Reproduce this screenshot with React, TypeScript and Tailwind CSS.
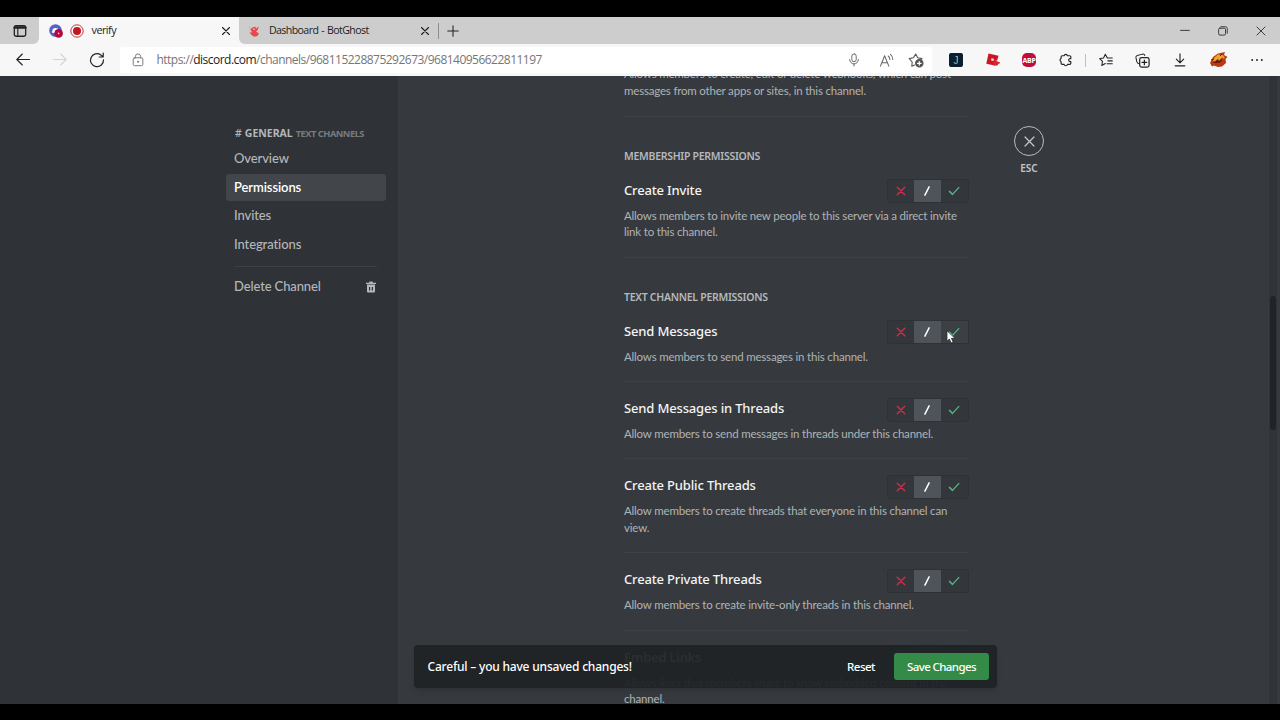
import { clsx } from "clsx";
import type { ReactNode } from "react";

type Permission = {
	title: string;
	lines: string[];
	hovered?: boolean;
};

const MEMBERSHIP: Permission[] = [
	{
		title: "Create Invite",
		lines: ["Allows members to invite new people to this server via a direct invite", "link to this channel."]
	}
];

const TEXT_CHANNEL: Permission[] = [
	{ title: "Send Messages", lines: ["Allows members to send messages in this channel."], hovered: true },
	{ title: "Send Messages in Threads", lines: ["Allow members to send messages in threads under this channel."] },
	{ title: "Create Public Threads", lines: ["Allow members to create threads that everyone in this channel can", "view."] },
	{ title: "Create Private Threads", lines: ["Allow members to create invite-only threads in this channel."] },
	{ title: "Embed Links", lines: ["Allows links that members share to show embedded content in this", "channel."] }
];

const NAV = ["Overview", "Permissions", "Invites", "Integrations"];

function Icon({ size = 16, className, children }: { size?: number; className?: string; children: ReactNode }) {
	return (
		<svg
			width={size}
			height={size}
			viewBox="0 0 16 16"
			fill="none"
			stroke="currentColor"
			strokeWidth="1.1"
			strokeLinecap="round"
			strokeLinejoin="round"
			className={clsx("shrink-0", className)}
		>
			{children}
		</svg>
	);
}

function Cell({ children }: { children: ReactNode }) {
	return <div className="flex w-[37px] shrink-0 items-center justify-center">{children}</div>;
}

function CloseIcon({ size = 8 }: { size?: number }) {
	return (
		<Icon size={size}>
			<path d="M1 1l14 14M15 1L1 15" strokeWidth="2.3" />
		</Icon>
	);
}

function TabStrip() {
	return (
		<div className="flex h-[27px] bg-[#f7f7f7] text-[#222]">
			<div className="flex w-[39px] items-center justify-center rounded-br-md bg-[#cdcdcd]">
				<Icon size={14} className="text-[#222]">
					<rect x="1.5" y="2" width="13" height="12" rx="2" strokeWidth="1.5" />
					<path d="M2 4h12" strokeWidth="3" />
					<path d="M5.5 5v9" strokeWidth="1.3" />
				</Icon>
			</div>
			<div className="flex w-[200px] items-center rounded-t-md bg-[#f7f7f7] pl-[9.5px]">
				<svg width="14" height="14" viewBox="0 0 14 14" className="shrink-0">
					<circle cx="6.5" cy="6.5" r="6.3" fill="#5661c9" />
					<path d="M3 8.7c.2-2.2.7-3.7 1.4-4.3C5.6 3.7 7.500 3.7 8.8 4.4L10 7 6 9z" fill="#fff" />
					<circle cx="9.6" cy="9.4" r="4.3" fill="#b3093a" />
					<circle cx="9.6" cy="9.4" r="0.9" fill="#f2c4cf" />
				</svg>
				<svg width="14" height="14" viewBox="0 0 14 14" className="ml-[7px] shrink-0">
					<circle cx="7" cy="7" r="6.2" fill="none" stroke="#b73842" strokeWidth="1" />
					<circle cx="7" cy="7" r="4" fill="#c4161f" />
				</svg>
				<span className="ml-[8px] flex-1 text-[10.8px] tracking-[-0.5px]">verify</span>
				<span className="mr-[9.5px]">
					<CloseIcon />
				</span>
			</div>
			<div className="flex flex-1 items-center rounded-bl-md bg-[#cdcdcd]">
				<svg width="12" height="12" viewBox="0 0 12 12" className="ml-[9px] shrink-0" fill="#e8484c">
					<path d="M.5.8l2.3 3.400L4.300 2.500 6 2l1.500-.3.500 2 2.800-2.500L9.700 5 8 6.700l3 1.500L9.500 11 6 11.700 3 9.500 1.500 7.300l2.800.200L3 5.500z" />
					<circle cx="6" cy="4.2" r=".9" fill="#f5b3b3" />
				</svg>
				<span className="ml-[9px] w-[151.5px] text-[10.6px] tracking-[-0.6px] [word-spacing:0.8px] whitespace-nowrap">
					Dashboard - BotGhost
				</span>
				<CloseIcon />
				<div className="ml-[9px] h-4 w-px bg-[#8d8d8d]" />
				<Icon size={12} className="ml-[8px] text-[#222]">
					<path d="M8 1v14M1 8h14" strokeWidth="1.4" />
				</Icon>
				<div className="mr-[14px] ml-auto flex items-center gap-[28px] text-[#333]">
					<Icon size={10}>
						<path d="M1 7h14" strokeWidth="1.5" />
					</Icon>
					<Icon size={10}>
						<rect x="1" y="3.5" width="11" height="11" rx="2" strokeWidth="1.5" />
						<path d="M4.5 1.2H12A2.800 2.800 0 0 1 14.8 4v7.500" strokeWidth="1.5" />
					</Icon>
					<Icon size={10}>
						<path d="M1.500 1.500l13 13M14.500 1.500l-13 13" strokeWidth="1.5" />
					</Icon>
				</div>
			</div>
		</div>
	);
}

function Toolbar() {
	return (
		<div className="flex h-8 items-center bg-[#f7f7f7] text-[#222]">
			<div className="flex w-[120px] items-center">
				<Icon className="ml-[15px]">
					<path d="M14.5 7.500H1.800M7.300 2L1.800 7.500l5.500 5.500" />
				</Icon>
				<Icon className="ml-[21px] text-[#d4d4d4]">
					<path d="M1.500 7.500h12.700M8.700 2L14.200 7.500l-5.500 5.500" />
				</Icon>
				<Icon className="ml-[20.5px]">
					<path d="M14.500 7.800A6.500 6.500 0 1 1 11.800 2.900L14 4.700M14.200 1v4h-4" strokeWidth="1.2" />
				</Icon>
			</div>
			<div className="flex h-[26px] w-[812px] items-center rounded-[3px] bg-white">
				<Icon size={14} className="ml-[11px] text-[#777]">
					<rect x="2.5" y="5.5" width="11" height="9" rx="1.5" />
					<path d="M5 5.500V4a3 3 0 0 1 6 0v1.500" />
					<circle cx="8" cy="10" r=".7" fill="currentColor" />
				</Icon>
				<span className="ml-[11.5px] flex-1 text-[12px] tracking-[-0.52px] whitespace-nowrap text-[#767676]">
					https://<span className="text-[#1b1b1b]">discord.com</span>/channels/968115228875292673/968140956622811197
				</span>
				<Icon size={14} className="text-[#666]">
					<rect x="5.5" y="1" width="5" height="9" rx="2.5" />
					<path d="M3 7.500a5 5 0 0 0 10 0M8 12.500V15" />
				</Icon>
				<Icon size={15} className="ml-[18px] text-[#666]">
					<path d="M1.500 14L6 3l4.500 11M3 10.500h6M9.800 3.200q1.800 1.300 1.800 3.800M12.200 1.500q2.500 2 2.500 5.500" />
				</Icon>
				<Icon size={16} className="mr-[8px] ml-[14px] text-[#555]">
					<path d="M6.500 13L3.800 14.200l.4-4.200L1.200 6.600l4.300-.8L7.700 2l2 3.800 4.300.8-1.200 1.300" />
					<circle cx="11.3" cy="11.3" r="3.7" fill="#555" />
					<path d="M11.300 9.500v3.600M9.500 11.300h3.600" stroke="#fff" strokeWidth="1.2" />
				</Icon>
			</div>
			<div className="ml-[5px] flex flex-1 items-center">
				<Cell>
					<svg width="14" height="14" viewBox="0 0 14 14">
						<rect width="14" height="14" rx="2" fill="#0b1f30" />
						<path d="M5 9.200q.3 1.300 1.800 1.300 1.500 0 1.500-1.500V3.500H6.500" fill="none" stroke="#6cb4dc" strokeWidth="1.2" />
					</svg>
				</Cell>
				<Cell>
					<svg width="14" height="14" viewBox="0 0 14 14">
						<path d="M2.500.5l10 2.200-1.300 4.800-2 .2-.6 4.800L.3 10.800z" fill="#cc1626" />
						<path d="M5.500 5.300l2.500.5-.5 2.300-2.500-.5z" fill="#f7d6d6" />
						<circle cx="9.800" cy="10.300" r="2.500" fill="#dc2432" />
						<circle cx="12.800" cy="9.800" r="1.100" fill="#dc2432" />
					</svg>
				</Cell>
				<Cell>
					<div className="mr-px flex size-[14px] items-center justify-center rounded-[5px] bg-[#c00d3c] text-[7px] leading-none font-bold tracking-[-0.3px] text-white">
						ABP
					</div>
				</Cell>
				<Cell>
					<Icon size={14} className="mr-px">
						<path
							d="M3.600 3.200h2.200a2 2 0 0 1 3.900 0h2.600a1.200 1.200 0 0 1 1.200 1.200v2h-.8a1.700 1.700 0 0 0 0 3.400h.8v2a1.200 1.200 0 0 1-1.200 1.200H9.700a2 2 0 0 1-3.900 0H3.600a1.200 1.200 0 0 1-1.200-1.200v-1.900a2 2 0 0 1 0-3.700V4.400a1.200 1.200 0 0 1 1.200-1.200z"
							strokeWidth="1.3"
						/>
					</Icon>
				</Cell>
				<div className="mr-px h-[13px] w-px bg-[#c0c0c0]" />
				<Cell>
					<Icon size={14}>
						<path
							d="M9.500 5.700L7.200 1.500 5.200 5.800.8 6.400l3.200 3.200-.8 4.700 4-2.300M9.500 5.700h5.700M10.200 9h5M9.200 12.300h6"
							strokeWidth="1.2"
						/>
					</Icon>
				</Cell>
				<Cell>
					<Icon size={15}>
						<rect x="5" y="5" width="10" height="10" rx="2" strokeWidth="1.3" />
						<path d="M10 7.500v5M7.500 10h5" strokeWidth="1.3" />
						<path d="M4.500 11.500A3 3 0 0 1 2 9.500L1 5A2 2 0 0 1 2.500 2.700L8 1.200a2 2 0 0 1 2.400 1.400" />
					</Icon>
				</Cell>
				<Cell>
					<Icon size={14}>
						<path d="M8 1v10M3.800 7L8 11.200 12.200 7M2.500 14.700h11" strokeWidth="1.3" />
					</Icon>
				</Cell>
				<div className="flex w-10 items-center justify-center pl-px">
					<svg width="20" height="18" viewBox="0 0 20 18">
						<path d="M1 12L4 6l5-3.500L16 1l-1 3 3.500 2-2 2 .5 4-4 3.500L9 16l-4-1.500-2 1z" fill="#b83912" />
						<path d="M5 7l4-3.500 5 .5 2 3-4 1-3 3-5-1z" fill="#f0a32b" />
						<path d="M4 12l5-4 1 2 4-4-2 5-3 1z" fill="#6b180d" />
						<path d="M2 9l3-1M11 5l2-2" stroke="#4b2413" />
					</svg>
				</div>
				<Cell>
					<Icon size={14}>
						<path d="M2.500 8h.01M8 8h.01M13.500 8h.01" strokeWidth="2.2" />
					</Icon>
				</Cell>
			</div>
		</div>
	);
}

function Toggle({ hovered }: { hovered?: boolean }) {
	return (
		<div className="relative -mt-[0.7px] -mr-[0.5px] flex h-6 w-[82px] shrink-0 rounded-[3px] border border-[#2e3135] bg-[#33363a]">
			<div className="flex w-[26px] items-center justify-center text-[#c5304a]">
				<Icon size={10}>
					<path d="M2 2l12 12M14 2L2 14" strokeWidth="2.4" />
				</Icon>
			</div>
			<div className="flex w-[27px] items-center justify-center bg-[#4f545a] text-white">
				<Icon size={12}>
					<path d="M10.800 2.500l-5.600 11" strokeWidth="2" />
				</Icon>
			</div>
			<div className={clsx("flex w-[27px] items-center justify-center text-[#55b083]", hovered && "bg-[#3c4044]")}>
				<Icon size={12}>
					<path d="M2 8.500l4 4L14.300 3.500" strokeWidth="1.9" />
				</Icon>
			</div>
			{hovered && (
				<svg width="10" height="14" viewBox="0 0 10 14" className="absolute top-[9px] left-[58px]">
					<path d="M1 .8v10.400l2.400-2.200 1.700 3.900 2-.9-1.700-3.700H9z" fill="#fff" stroke="#222" strokeWidth=".7" />
				</svg>
			)}
		</div>
	);
}

function Description({ lines }: { lines: string[] }) {
	return (
		<div className="font-['Lato',sans-serif] text-[11.5px] leading-[16.5px] tracking-[-0.19px] text-[#b0b3b7]">
			{lines.map((line) => (
				<p key={line} className="whitespace-nowrap">
					{line}
				</p>
			))}
		</div>
	);
}

function PermissionRow({ title, lines, hovered }: Permission) {
	return (
		<div className="border-b border-[#3e4246] pt-4 pb-[15.8px]">
			<div className="flex h-7 items-start justify-between">
				<h3 className="text-[13px] leading-5 font-medium tracking-[-0.16px] whitespace-nowrap text-[#f3f4f5]">
					{title}
				</h3>
				<Toggle hovered={hovered} />
			</div>
			<Description lines={lines} />
		</div>
	);
}

function Section({ heading, items }: { heading: string; items: Permission[] }) {
	return (
		<section className="pt-[32.3px]">
			<h2 className="text-[10.5px] leading-[15px] font-semibold tracking-[-0.28px] text-[#b5b8bc] uppercase">
				{heading}
			</h2>
			{items.map((item) => (
				<PermissionRow key={item.title} {...item} />
			))}
		</section>
	);
}

function Sidebar() {
	return (
		<aside className="w-[398px] shrink-0 bg-[#2f3236] pt-12 pl-[226px] text-[#b4b7bb]">
			<div className="flex h-[18px] items-center pt-px pl-[9px] text-[10.5px] font-bold whitespace-nowrap">
				<span className="mr-[3px] font-medium">#</span>
				GENERAL
				<span className="ml-[3px] text-[9.3px] font-bold tracking-[-0.5px] text-[#777b80]">TEXT CHANNELS</span>
			</div>
			<nav className="mt-[3px] flex w-40 flex-col gap-[1.5px] font-['Lato',sans-serif] text-[13px] font-medium">
				{NAV.map((item) => (
					<a
						key={item}
						className={clsx(
							"flex h-[27px] items-center rounded-[3px] px-2 pt-px tracking-[-0.1px]",
							item === "Permissions" && "bg-[#42464b] font-semibold text-white"
						)}
					>
						{item}
					</a>
				))}
			</nav>
			<div className="mt-[8px] ml-2 h-px w-[143px] bg-[#3d4044]" />
			<div className="mt-[6px] ml-2 flex h-[27px] w-[143px] items-center justify-between pt-px font-['Lato',sans-serif] text-[13px] font-medium tracking-[-0.12px]">
				Delete Channel
				<svg width="12" height="12" viewBox="0 0 12 12" fill="#b4b7bb">
					<path d="M1 1.800h3L4.600.6h2.800L8 1.800h3V3H1z" />
					<path fillRule="evenodd" d="M2 3.600h8v6.900q0 1-1 1H3q-1 0-1-1zM4 6v3.500h1.200V6zm2.800 0v3.500H8V6z" />
				</svg>
			</div>
		</aside>
	);
}

function UnsavedBar() {
	return (
		<div className="absolute top-[569px] left-4 flex h-[43px] w-[583px] items-center rounded-[4px] bg-[#202326]/95 pr-2 pl-[13.5px] text-[12px] font-medium text-white shadow-md">
			<span className="flex-1 tracking-[-0.2px]">Careful – you have unsaved changes!</span>
			<button className="mr-[19px] text-[11.5px] tracking-[-0.5px]">Reset</button>
			<button className="h-[27px] w-[95px] rounded-[3px] bg-[#338b47] text-[11.5px] tracking-[-0.6px] whitespace-nowrap">
				Save Changes
			</button>
		</div>
	);
}

export default function App() {
	return (
		<div className="h-[720px] w-[1280px] overflow-hidden bg-black pt-[17px] font-['Open_Sans',sans-serif]">
			<TabStrip />
			<Toolbar />
			<div className="flex h-[628px] overflow-hidden font-['Noto_Sans',sans-serif]">
				<Sidebar />
				<main className="relative flex flex-1 overflow-hidden bg-[#363a3e] pl-[226px]">
					<div className="w-[344px] shrink-0">
						<div className="-mt-[10px] border-b border-[#3e4246] pb-[16.5px]">
							<Description
								lines={[
									"Allows members to create, edit or delete webhooks, which can post",
									"messages from other apps or sites, in this channel."
								]}
							/>
						</div>
						<Section heading="Membership Permissions" items={MEMBERSHIP} />
						<Section heading="Text Channel Permissions" items={TEXT_CHANNEL} />
					</div>
					<div className="mt-[50px] ml-[46px] flex h-12 w-[30px] flex-col items-center text-[#c3c6c9]">
						<div className="flex size-[30px] shrink-0 items-center justify-center rounded-full border-[1.5px] border-[#b9bcbf]">
							<Icon size={11}>
								<path d="M1.500 1.500l13 13M14.500 1.500l-13 13" strokeWidth="1.8" />
							</Icon>
						</div>
						<span className="mt-[5px] text-[10px] leading-[15px] font-semibold">ESC</span>
					</div>
					<div className="mr-[3px] ml-auto w-2 bg-[#303338] px-px pt-[220px]">
						<div className="h-[134px] rounded-full bg-[#202327]" />
					</div>
					<UnsavedBar />
				</main>
			</div>
		</div>
	);
}
